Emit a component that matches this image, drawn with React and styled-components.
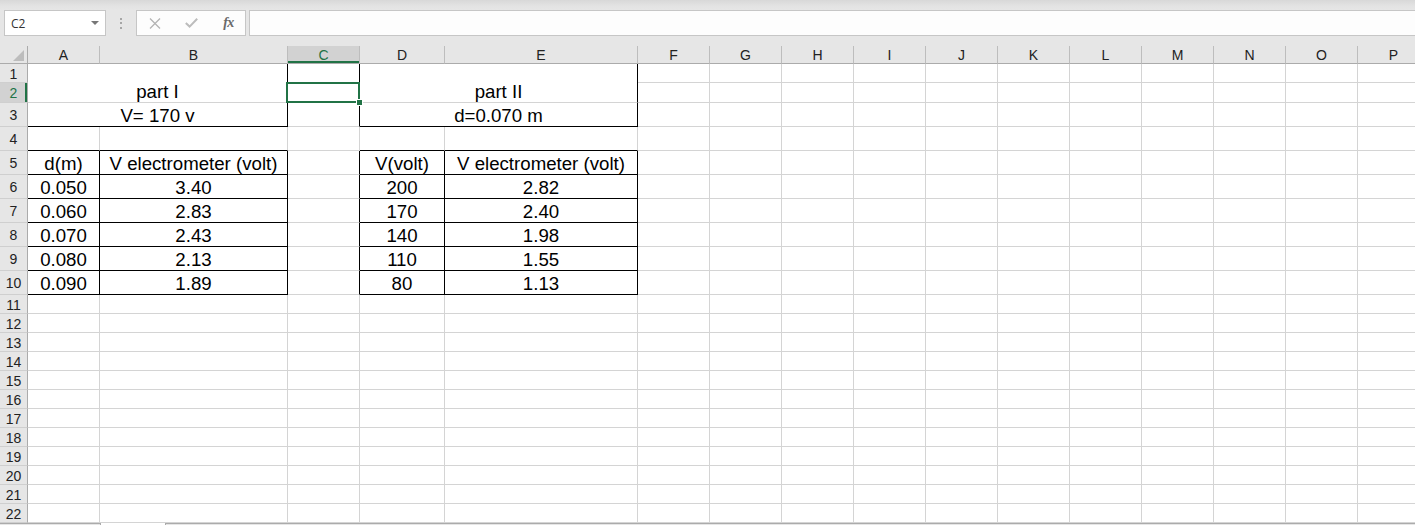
import React from "react"
import styled, { createGlobalStyle, css } from "styled-components"

const GREEN = "#217346"
const GRID = "#d4d4d4"
const HEAD_LINE = "#ababab"

const COLUMNS = [
  ["A", 72], ["B", 188], ["C", 72], ["D", 85], ["E", 193],
  ["F", 72], ["G", 72], ["H", 72], ["I", 72], ["J", 72], ["K", 72],
  ["L", 72], ["M", 72], ["N", 72], ["O", 72], ["P", 72],
]
const COL_KEYS = COLUMNS.map(c => c[0])
const ROW_HEIGHTS = [19, 20, 24, 24, 24, 24, 24, 24, 24, 24, ...Array(12).fill(19)]

const SELECTED = { col: "C", row: 2 }

// merged cells carry their span, plain cells are just text
const CELLS = {
  A1: { text: "part I", cols: 2, rows: 2 },
  D1: { text: "part II", cols: 2, rows: 2 },
  A3: { text: "V= 170 v", cols: 2 },
  D3: { text: "d=0.070 m", cols: 2 },
  A5: "d(m)", B5: "V electrometer (volt)",
  D5: "V(volt)", E5: "V electrometer (volt)",
  A6: "0.050", B6: "3.40", D6: "200", E6: "2.82",
  A7: "0.060", B7: "2.83", D7: "170", E7: "2.40",
  A8: "0.070", B8: "2.43", D8: "140", E8: "1.98",
  A9: "0.080", B9: "2.13", D9: "110", E9: "1.55",
  A10: "0.090", B10: "1.89", D10: "80", E10: "1.13",
}

const covered = new Set()
Object.entries(CELLS).forEach(([ref, v]) => {
  if (typeof v !== "object") return
  const col = COL_KEYS.indexOf(ref[0])
  const row = Number(ref.slice(1))
  for (let c = 0; c < (v.cols || 1); c++)
    for (let r = 0; r < (v.rows || 1); r++)
      if (c || r) covered.add(COL_KEYS[col + c] + (row + r))
})

const bottomBlack = (c, r) => ["A", "B", "D", "E"].includes(c) && r >= 3 && r <= 10
const rightBlack = (c, r) =>
  (r <= 3 && ["B", "C", "E"].includes(c)) ||
  (r >= 5 && r <= 10 && ["A", "B", "C", "D", "E"].includes(c))

const GlobalStyle = createGlobalStyle`
  html, body {
    margin: 0;
    padding: 0;
    overflow: hidden;
    background: #fff;
  }
  body {
    font-family: "Liberation Sans", Arial, sans-serif;
  }
`

const Window = styled.div`
  width: 1415px;
  height: 525px;
  overflow: hidden;
  background: #e6e6e6;
`

const FormulaRow = styled.div`
  display: flex;
  align-items: center;
  height: 46px;
  padding: 10px 0 10px 4px;
  box-sizing: border-box;
  background: linear-gradient(#d8d8d8 0, #e3e3e3 6px, #e6e6e6 10px);
`

const NameBox = styled.div`
  position: relative;
  display: flex;
  align-items: center;
  width: 102px;
  height: 26px;
  box-sizing: border-box;
  padding-left: 6px;
  background: #fff;
  border: 1px solid #c6c6c6;
  font-family: "Open Sans", "Liberation Sans", sans-serif;
  font-size: 12px;
  color: #333;
`

const DropArrow = styled.span`
  position: absolute;
  right: 6px;
  top: 10px;
  border-left: 4px solid transparent;
  border-right: 4px solid transparent;
  border-top: 4px solid #777;
`

const Grip = styled.div`
  display: flex;
  flex-direction: column;
  justify-content: center;
  gap: 2.5px;
  width: 30px;
  align-items: center;

  span {
    width: 2px;
    height: 2px;
    background: #a6a6a6;
  }
`

const ButtonGroup = styled.div`
  display: flex;
  width: 110px;
  height: 26px;
  box-sizing: border-box;
  background: #fdfdfd;
  border: 1px solid #c6c6c6;
`

const BarButton = styled.div`
  flex: 1;
  display: flex;
  align-items: center;
  justify-content: center;
  color: ${p => p.$color || "#b4b4b4"};
`

const Fx = styled.span`
  font-family: "Liberation Serif", "Times New Roman", serif;
  font-style: italic;
  font-weight: bold;
  font-size: 14px;
  color: #6a6a6a;
  letter-spacing: -0.5px;
  margin-left: 3px;
`

const FormulaInput = styled.div`
  flex: 1;
  height: 26px;
  margin-left: 3px;
  box-sizing: border-box;
  background: #fdfdfd;
  border: 1px solid #c6c6c6;
  border-right: none;
`

const Sheet = styled.div`
  display: grid;
  grid-template-columns: 28px ${COLUMNS.map(c => c[1] + "px").join(" ")};
  grid-template-rows: 18px ${ROW_HEIGHTS.map(h => h + "px").join(" ")};
  background: #fff;
`

const Corner = styled.div`
  position: relative;
  background: #e6e6e6;
  border-right: 1px solid ${HEAD_LINE};
  border-bottom: 1px solid ${HEAD_LINE};

  &::after {
    content: "";
    position: absolute;
    right: 3px;
    bottom: 2px;
    border-left: 11px solid transparent;
    border-bottom: 11px solid #bdbdbd;
  }
`

const ColHead = styled.div`
  display: flex;
  align-items: center;
  justify-content: center;
  box-sizing: border-box;
  padding-top: 2px;
  background: ${p => (p.$selected ? "#d2d2d2" : "#e6e6e6")};
  border-right: 1px solid #bdbdbd;
  border-bottom: 1px solid ${HEAD_LINE};
  font-size: 14px;
  line-height: 17px;
  color: ${p => (p.$selected ? GREEN : "#222")};
  ${p => p.$selected && css`
    box-shadow: inset 0 -2px 0 ${GREEN};
  `}
`

const RowHead = styled.div`
  display: flex;
  align-items: center;
  justify-content: center;
  box-sizing: border-box;
  padding-top: 1px;
  background: ${p => (p.$selected ? "#d2d2d2" : "#e6e6e6")};
  border-right: 1px solid ${HEAD_LINE};
  border-bottom: 1px solid #cfcfcf;
  font-size: 14px;
  color: ${p => (p.$selected ? GREEN : "#222")};
  ${p => p.$selected && css`
    box-shadow: inset -2px 0 0 ${GREEN};
  `}
`

const Cell = styled.div`
  position: relative;
  display: flex;
  align-items: flex-end;
  justify-content: center;
  box-sizing: border-box;
  min-width: 0;
  grid-column: span ${p => p.$cols};
  grid-row: span ${p => p.$rows};
  border-right: 1px solid ${p => (p.$rb ? "#000" : GRID)};
  border-bottom: 1px solid ${p => (p.$bb ? "#000" : GRID)};
  font-size: 18.67px;
  line-height: 21px;
  color: #000;
  white-space: nowrap;

  ${p => p.$active && css`
    z-index: 2;
    &::before {
      content: "";
      position: absolute;
      top: -1px;
      left: -2px;
      right: -1px;
      bottom: -1px;
      border: 2px solid ${GREEN};
    }
    &::after {
      content: "";
      position: absolute;
      right: -4px;
      bottom: -4px;
      width: 7px;
      height: 7px;
      box-sizing: border-box;
      background: ${GREEN};
      border: 1px solid #fff;
    }
  `}
`

const TabBar = styled.div`
  display: flex;
  height: 30px;
  background: #e6e6e6;
  border-top: 1px solid ${HEAD_LINE};
`

const SheetTab = styled.div`
  width: 64px;
  margin-left: 100px;
  margin-top: -1px;
  background: #fff;
  border-left: 1px solid ${HEAD_LINE};
  border-right: 1px solid ${HEAD_LINE};
`

const CrossIcon = () => (
  <svg width="12" height="11" viewBox="0 0 12 11">
    <path d="M1 0.5 L11 10.5 M11 0.5 L1 10.5" stroke="currentColor" strokeWidth="1.3" fill="none" />
  </svg>
)

const CheckIcon = () => (
  <svg width="13" height="10" viewBox="0 0 13 10">
    <path d="M0.8 5 L4.6 8.6 L12.2 0.8" stroke="currentColor" strokeWidth="2" fill="none" />
  </svg>
)

const App = () => {
  return (
    <Window>
      <GlobalStyle />
      <FormulaRow>
        <NameBox>
          C2
          <DropArrow />
        </NameBox>
        <Grip>
          <span />
          <span />
          <span />
        </Grip>
        <ButtonGroup>
          <BarButton><CrossIcon /></BarButton>
          <BarButton $color="#bcbcbc"><CheckIcon /></BarButton>
          <BarButton><Fx>fx</Fx></BarButton>
        </ButtonGroup>
        <FormulaInput />
      </FormulaRow>

      <Sheet>
        <Corner />
        {COL_KEYS.map(k => (
          <ColHead key={k} $selected={k === SELECTED.col}>{k}</ColHead>
        ))}
        {ROW_HEIGHTS.map((_, i) => {
          const row = i + 1
          return (
            <React.Fragment key={row}>
              <RowHead $selected={row === SELECTED.row}>{row}</RowHead>
              {COL_KEYS.map((col, ci) => {
                const ref = col + row
                if (covered.has(ref)) return null
                const v = CELLS[ref]
                const merged = typeof v === "object" ? v : null
                const cols = merged?.cols || 1
                const rows = merged?.rows || 1
                const lastCol = COL_KEYS[ci + cols - 1]
                const lastRow = row + rows - 1
                return (
                  <Cell
                    key={ref}
                    $cols={cols}
                    $rows={rows}
                    $rb={rightBlack(lastCol, row)}
                    $bb={bottomBlack(col, lastRow)}
                    $active={col === SELECTED.col && row === SELECTED.row}
                  >
                    {merged ? merged.text : v}
                  </Cell>
                )
              })}
            </React.Fragment>
          )
        })}
      </Sheet>
      <TabBar>
        <SheetTab />
      </TabBar>
    </Window>
  )
}

export default App
